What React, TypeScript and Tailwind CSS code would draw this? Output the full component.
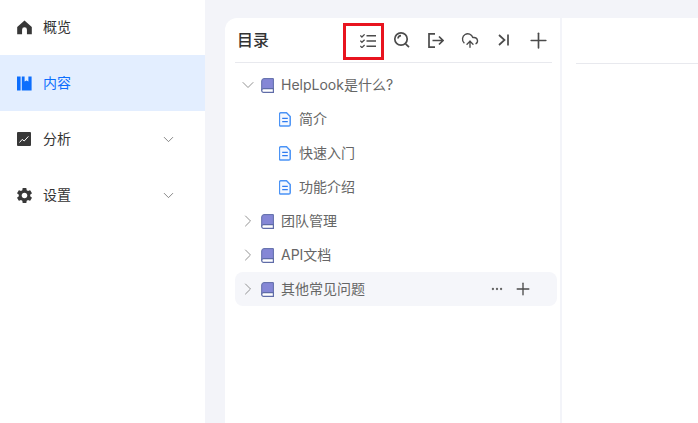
import { ChevronDown, ChevronRight, Plus, Ellipsis, CloudUpload } from 'lucide-react';
import { MdSettings } from 'react-icons/md';
import type { ReactNode } from 'react';

const Book = () => (
  <svg width="13" height="15" viewBox="0 0 13 15" className="shrink-0">
    <path d="M3 .6h9.4v10.6H3A2.2 2.2 0 0 0 .7 12.6V3A2.4 2.4 0 0 1 3 .6z" fill="#8587d6" stroke="#5f6ca8" strokeWidth="1" />
    <path d="M.8 12.4a1.7 1.7 0 0 1 1.8-1.8h9.8v3.8H2.6a1.8 1.8 0 0 1-1.8-2z" fill="#fff" stroke="#5f6ca8" strokeWidth="1.2" />
  </svg>
);

const Doc = () => (
  <svg width="12" height="15" viewBox="0 0 12 15" fill="none" className="shrink-0">
    <path d="M1.7 .8h5.8l3.7 3.7v8.2a1.3 1.3 0 0 1-1.3 1.3H1.7A1.3 1.3 0 0 1 .4 12.7V2.1A1.3 1.3 0 0 1 1.7 .8z" fill="#f4f8ff" stroke="#4a93f6" strokeWidth="1.5" />
    <path d="M3.2 6.4h5.6M3.2 9.6h5.6" stroke="#2f7cf0" strokeWidth="1.2" />
  </svg>
);

const HomeIcon = () => (
  <svg width="15" height="15" viewBox="0 0 16 16" className="shrink-0">
    <path d="M8 .6 15.8 7.4V15.2H10.6V10.4A2.6 2.6 0 0 0 5.4 10.4V15.2H.2V7.4z" fill="#383838" />
  </svg>
);

const ContentIcon = () => (
  <svg width="15" height="15" viewBox="0 0 15 15" className="shrink-0">
    <path d="M0 .5h3.6v14H0zM4.8 .5H7.6V5.6L9.6 4.4 11.4 5.6V.5H14.6v14H4.8z" fill="#0d6efd" />
  </svg>
);

const ChartIcon = () => (
  <svg width="14" height="14" viewBox="0 0 14 14" className="shrink-0">
    <rect width="14" height="14" rx="1" fill="#383838" />
    <path d="M2.5 10.5 5.2 7.4l2 1.6 4.2-4.6" fill="none" stroke="#fff" strokeWidth="1" />
  </svg>
);

const ChecklistIcon = () => (
  <svg width="16" height="14" viewBox="0 0 16 14" fill="none" stroke="#4b4b4b" className="shrink-0">
    <path d="M6.5 1.7H16M6.5 7H16M6.5 12.3H16" strokeWidth="1.6" />
    <path d="M.3 1.4l1.6 1.6L4.6.4M.3 6.7l1.6 1.6 2.7-2.6M.3 12l1.6 1.6 2.7-2.6" strokeWidth="1.3" />
  </svg>
);

const SearchIcon = () => (
  <svg width="18" height="18" viewBox="0 0 18 18" fill="none" stroke="#4b4b4b" strokeWidth="1.7" className="shrink-0">
    <circle cx="8" cy="8" r="6.2" />
    <path d="M5 7.5A3.2 3.2 0 0 1 8 4.6M12.6 12.8 16 16.2" />
  </svg>
);

const ExitIcon = () => (
  <svg width="16" height="15" viewBox="0 0 16 15" fill="none" stroke="#4b4b4b" strokeWidth="1.7" className="shrink-0">
    <path d="M7 .9H1v13.2h6M4.5 7.5H15M11 3.5l4 4-4 4" />
  </svg>
);

const ExpandEnd = () => (
  <svg width="16" height="16" viewBox="0 0 16 16" fill="none" stroke="#4b4b4b" strokeWidth="1.7" className="shrink-0">
    <path d="M3 3l5.5 5L3 13M12 2.5v11" />
  </svg>
);

const ToolSlot = ({ children }: { children: ReactNode }) => (
  <span className="flex w-[18px] items-center justify-center">{children}</span>
);

function NavItem({ icon, label, active, arrow, short }: { icon: ReactNode; label: string; active?: boolean; arrow?: boolean; short?: boolean }) {
  return (
    <div className={`flex items-center pl-[16px] pr-[28px] text-[14px] ${short ? 'h-[55px]' : 'h-14'} ${active ? 'bg-[#e3eeff] text-[#0d6efd]' : 'text-[#333]'}`}>
      <span className="flex w-[27px] items-center pl-px">{icon}</span>
      <span className="-mt-[2px] flex-1">{label}</span>
      {arrow && <ChevronDown size={17} className="text-[#666]" strokeWidth={1.1} />}
    </div>
  );
}

function BookRow({ label, open, hover }: { label: string; open?: boolean; hover?: boolean }) {
  return (
    <div className={`flex h-[34px] items-center rounded-lg pl-[3px] pr-[24px] ${hover ? 'bg-[#f5f6fa]' : ''}`}>
      {open ? (
        <ChevronDown size={20} className="mr-[3px] text-[#888]" strokeWidth={1.1} />
      ) : (
        <ChevronRight size={20} className="mr-[3px] text-[#888]" strokeWidth={1.1} />
      )}
      <Book />
      <span className="-mt-[2px] ml-[7px] flex-1 text-[14px] text-[#666]">{label}</span>
      {hover && (
        <span className="flex items-center gap-[9px]">
          <Ellipsis size={14} className="text-[#666]" />
          <Plus size={20} className="text-[#4b4b4b]" strokeWidth={1.6} />
        </span>
      )}
    </div>
  );
}

function DocRow({ label }: { label: string }) {
  return (
    <div className="flex h-[34px] items-center gap-[9px] pl-[43px]">
      <span className="ml-px -mr-px flex"><Doc /></span>
      <span className="-mt-[2px] text-[14px] text-[#666]">{label}</span>
    </div>
  );
}

export default function App() {
  return (
    <div
      className="flex h-[423px] w-[698px] overflow-hidden bg-[#f3f4f9]"
      style={{ fontFamily: 'Inter, "Noto Sans CJK SC", sans-serif' }}
    >
      <aside className="w-[205px] shrink-0 bg-white">
        <NavItem icon={<HomeIcon />} label="概览" short />
        <NavItem icon={<ContentIcon />} label="内容" active />
        <NavItem icon={<ChartIcon />} label="分析" arrow />
        <NavItem icon={<MdSettings size={19} className="-ml-[2px] text-[#383838]" />} label="设置" arrow />
      </aside>

      <div className="ml-5 mt-[18px] flex flex-1">
        <section className="w-[335px] shrink-0 rounded-tl-xl bg-white pl-[10px] pr-[3px]">
          <div className="mr-[5px] flex h-[45px] items-center border-b border-[#e8e9ee] pl-[2px] pr-[5px]">
            <h2 className="flex-1 text-[16px] font-medium text-[#333]">目录</h2>
            <div className="mr-[9px] mt-[2px] flex h-[37px] w-[41px] items-center justify-center border-[3px] border-[#e8141f] pl-[8px]">
              <ChecklistIcon />
            </div>
            <div className="flex items-center gap-[16px] text-[#4b4b4b]">
              <ToolSlot><SearchIcon /></ToolSlot>
              <ToolSlot><ExitIcon /></ToolSlot>
              <ToolSlot><CloudUpload size={19} strokeWidth={1.8} /></ToolSlot>
              <ToolSlot><ExpandEnd /></ToolSlot>
              <ToolSlot><Plus size={25} className="shrink-0" strokeWidth={1.6} /></ToolSlot>
            </div>
          </div>
          <div className="pt-[5px]">
            <BookRow label="HelpLook是什么?" open />
            <DocRow label="简介" />
            <DocRow label="快速入门" />
            <DocRow label="功能介绍" />
            <BookRow label="团队管理" />
            <BookRow label="API文档" />
            <BookRow label="其他常见问题" hover />
          </div>
        </section>
        <section className="ml-[2px] flex-1 bg-white pl-[14px]">
          <div className="h-[46px] border-b border-[#e8e9ee]" />
        </section>
      </div>
    </div>
  );
}
